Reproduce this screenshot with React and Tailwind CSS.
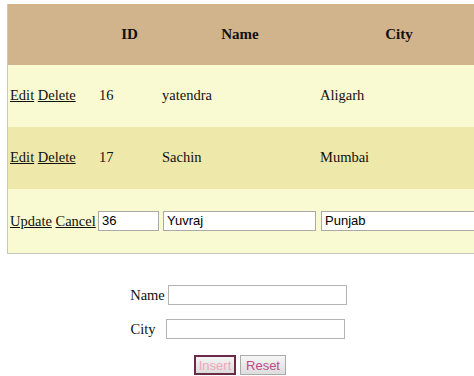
export default function App() {
  const serif = { fontFamily: '"Liberation Serif", "Times New Roman", serif' };
  const inputCls =
    "h-[20px] border border-[#a9a9a9] bg-white px-[3px] text-[13px] text-black outline-none font-['Liberation_Sans',Arial,sans-serif]";
  return (
    <div className="w-[474px] h-[376px] overflow-hidden bg-white text-[14.5px] text-[#111]" style={serif}>
      <div className="pt-[4px] pl-[7px]">
        <div className="w-[480px] border-l border-b border-[#c8c8c0]">
          <div className="flex h-[61px] items-center bg-[#d2b48c] font-bold text-[15px]">
            <div className="w-[90px] shrink-0" />
            <div className="w-[63px] shrink-0 text-center">ID</div>
            <div className="w-[158px] shrink-0 text-center">Name</div>
            <div className="w-[160px] shrink-0 text-center">City</div>
          </div>
          <div className="flex h-[62px] items-center bg-[#fafad2]">
            <div className="w-[90px] shrink-0 pl-[2px] whitespace-nowrap">
              <span className="underline">Edit</span> <span className="underline">Delete</span>
            </div>
            <div className="w-[63px] shrink-0 pl-[1px]">16</div>
            <div className="w-[158px] shrink-0 pl-[1px]">yatendra</div>
            <div className="w-[160px] shrink-0 pl-[1px]">Aligarh</div>
          </div>
          <div className="flex h-[62px] items-center bg-[#eee8aa]">
            <div className="w-[90px] shrink-0 pl-[2px] whitespace-nowrap">
              <span className="underline">Edit</span> <span className="underline">Delete</span>
            </div>
            <div className="w-[63px] shrink-0 pl-[1px]">17</div>
            <div className="w-[158px] shrink-0 pl-[1px]">Sachin</div>
            <div className="w-[160px] shrink-0 pl-[1px]">Mumbai</div>
          </div>
          <div className="flex h-[64px] items-center bg-[#fafad2]">
            <div className="w-[90px] shrink-0 pl-[2px] pt-[2px] whitespace-nowrap">
              <span className="underline">Update</span> <span className="underline">Cancel</span>
            </div>
            <div className="w-[65px] shrink-0">
              <input className={inputCls + " w-[61px]"} defaultValue="36" />
            </div>
            <div className="w-[158px] shrink-0">
              <input className={inputCls + " w-[153px]"} defaultValue="Yuvraj" />
            </div>
            <div className="w-[160px] shrink-0">
              <input className={inputCls + " w-[160px]"} defaultValue="Punjab" />
            </div>
          </div>
        </div>
      </div>
      <div className="mt-[31px] flex flex-col items-center">
        <div className="flex items-center ml-[3px] leading-[20px]">
          <span className="mr-[3px]">Name</span>
          <input className={inputCls + " w-[179px] h-[18px] border-[#b4b4b4]"} />
        </div>
        <div className="mt-[14px] flex items-center ml-[2px] leading-[20px]">
          <span className="mr-[11px]">City</span>
          <input className={inputCls + " w-[179px] h-[18px] border-[#b4b4b4]"} />
        </div>
        <div className="mt-[16px] flex items-center gap-[4px] ml-[6px]">
          <button className="h-[20px] w-[42px] border-2 border-[#6a2a48] bg-gradient-to-b from-[#f4f4f4] to-[#dcdcdc] text-[13px] text-[#f0a8b8] font-['Liberation_Sans',Arial,sans-serif] leading-none">
            Insert
          </button>
          <button className="h-[20px] w-[46px] border border-[#aaa] bg-gradient-to-b from-[#f6f6f6] to-[#dddddd] text-[13px] text-[#c04a86] font-['Liberation_Sans',Arial,sans-serif] leading-none">
            Reset
          </button>
        </div>
      </div>
    </div>
  );
}
